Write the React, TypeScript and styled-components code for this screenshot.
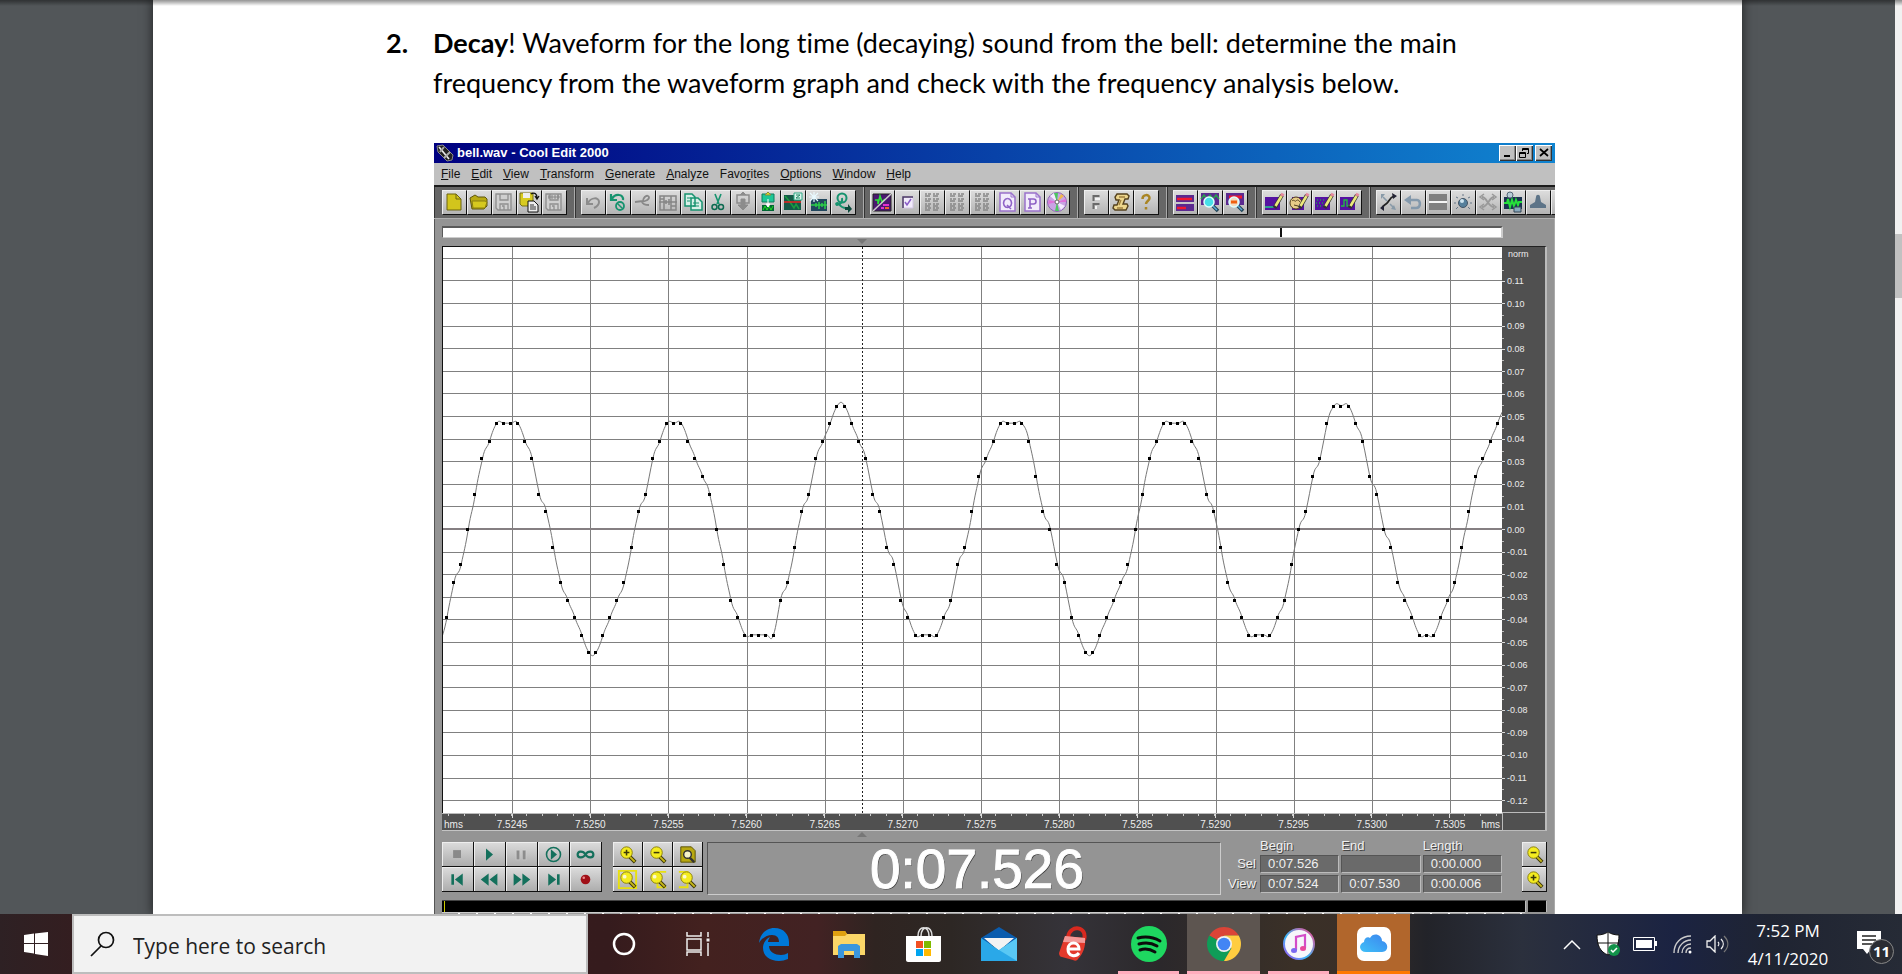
import React from "react";
import styled, { createGlobalStyle, css } from "styled-components";

const Global = createGlobalStyle`
  * { box-sizing: border-box; }
  html, body, #root { height: 100%; }
  body { margin: 0; overflow: hidden; background: #525659; font-family: "Liberation Sans", Arial, sans-serif; }
  button { font: inherit; color: inherit; margin: 0; padding: 0; border: 0; background: none; }
  svg { display: block; flex: none; }
`;

/* ---------- viewer ---------- */

const Screen = styled.div`
  height: 100vh;
  display: grid;
  grid-template-rows: minmax(0, 1fr) 60px;
`;
const Viewer = styled.main`
  position: relative;
  display: flex;
  overflow: hidden;
  background: #525659;
  &::after {
    content: "";
    position: absolute;
    inset: 0 0 auto 0;
    height: 6px;
    background: linear-gradient(rgba(0, 0, 0, 0.42), rgba(0, 0, 0, 0.3) 30%, rgba(0, 0, 0, 0));
  }
`;
const Desk = styled.div`
  flex: 1;
  min-width: 0;
  display: flex;
  justify-content: center;
  overflow: hidden;
`;
const Sheet = styled.article`
  width: 100%;
  max-width: 1589px;
  background: #fff;
  box-shadow: 0 0 10px 1px rgba(0, 0, 0, 0.55);
  padding: 23px 186px 0 233px;
`;
const Question = styled.div`
  display: flex;
  margin-bottom: 40px;
  font: 27px/40px Lato, Carlito, sans-serif;
  font-variant-ligatures: none;
  color: #000;
`;
const QuestionNumber = styled.b`
  flex: 0 0 47px;
`;
const QuestionText = styled.p`
  margin: 0;
`;
const ScrollTrack = styled.div`
  width: 7px;
  background: #f1f1f1;
  padding-top: 234px;
`;
const ScrollThumb = styled.div`
  height: 64px;
  background: #c1c1c1;
`;

/* ---------- audio editor window ---------- */

const EditorWindow = styled.section`
  margin-left: 48px;
  max-width: 1121px;
  background: #949494;
`;
const TitleBar = styled.header`
  height: 20px;
  display: flex;
  align-items: center;
  padding: 0 3px 0 2px;
  background: linear-gradient(90deg, #000080, #1084d0);
  color: #fff;
`;
const TitleText = styled.h1`
  flex: 1;
  margin: 0 0 0 3px;
  font-size: 13px;
  line-height: 20px;
`;
const CaptionButton = styled.button<{ $gap?: boolean }>`
  width: 17px;
  height: 16px;
  margin-left: ${(p) => (p.$gap ? 2 : 0)}px;
  background: #c0c0c0;
  box-shadow: inset 1px 1px #fff, inset -1px -1px #333, inset -2px -2px #888;
  display: grid;
  place-items: center;
`;
const MenuBar = styled.nav`
  height: 22px;
  display: flex;
  align-items: center;
  gap: 11px;
  padding-left: 7px;
  background: #c0c0c0;
`;
const MenuItem = styled.button`
  font-size: 12px;
  line-height: 20px;
  color: #111;
`;
const Toolbar = styled.div`
  height: 34px;
  display: flex;
  overflow: hidden;
  background: #666;
  border-top: 2px solid #1c1c1c;
  border-bottom: 1px solid #b0b0b0;
`;
const ToolGroup = styled.div<{ $first?: boolean; $last?: boolean }>`
  display: flex;
  flex: none;
  gap: 1px;
  padding: 3px 8px 0 ${(p) => (p.$first ? 8 : 6)}px;
  border-left: ${(p) => (p.$first ? 0 : 1)}px solid #aaa;
  box-shadow: inset 1px 0 #333;
  ${(p) => p.$last && css`flex: 1 0 0; min-width: 0; padding-right: 0;`}
`;
const ToolButton = styled.button`
  flex: none;
  width: 24px;
  height: 24px;
  display: grid;
  place-items: center;
  background: linear-gradient(#dedede, #b4b4b4);
  box-shadow: inset 1px 1px #eee, 1px 1px #111;
`;
const Work = styled.div`
  border-left: 1px solid #555;
  border-right: 1px solid #aaa;
  padding: 7px 7px 0;
`;
const Overview = styled.div`
  height: 12px;
  margin-right: 44px;
  display: flex;
  justify-content: flex-end;
  padding-right: 19.8%;
  background: #fff;
  border: solid;
  border-width: 2px 2px 1px 1px;
  border-color: #5a5a5a #ccc #ccc #5a5a5a;
`;
const OverviewMark = styled.div`
  width: 2px;
  background: #111;
`;
const CursorRow = styled.div<{ $h: number }>`
  height: ${(p) => p.$h}px;
  display: flex;
  padding: 1px 0 0 37.6%;
`;
const Scope = styled.div`
  display: grid;
  grid-template-columns: minmax(0, 1fr) 45px;
  grid-template-rows: 567px 18px;
`;
const Plot = styled.div`
  border-top: 1px solid #111;
  border-left: 1px solid #111;
  background: #fff;
  svg { width: 100%; height: 566px; }
`;
const LevelAxis = styled.div`
  display: flex;
  flex-direction: column;
  background: #505050;
  border-top: 1px solid #222;
  border-right: 2px solid #bbb;
  border-bottom: 1px solid #bbb;
  color: #ececec;
  font-size: 9px;
`;
const LevelUnit = styled.span`
  height: 23px;
  line-height: 14px;
  padding-left: 6px;
`;
const LevelMark = styled.span`
  flex: 1;
  display: flex;
  align-items: center;
  gap: 2px;
  white-space: nowrap;
  background: linear-gradient(#bbb, #bbb) left top / 2px 1px no-repeat;
  &::before { content: ""; width: 3px; height: 1px; background: #ddd; }
`;
const TimeAxis = styled.div`
  display: flex;
  align-items: flex-start;
  background: repeating-linear-gradient(90deg, #ccc 0 1px, transparent 1px 1.475%) 6px 0 / 100% 2px no-repeat #505050;
  border-top: 1px solid #bbb;
  border-bottom: 1px solid #c4c4c4;
  color: #ececec;
  font-size: 10px;
  line-height: 13px;
`;
const TimeUnit = styled.span<{ $w: number; $end?: boolean }>`
  flex: 0 0 ${(p) => p.$w}px;
  min-width: 0;
  display: flex;
  justify-content: ${(p) => (p.$end ? "flex-end" : "flex-start")};
  padding: 4px 2px 0;
  white-space: nowrap;
`;
const TimeMark = styled.span`
  flex: 1 1 0;
  display: flex;
  flex-direction: column;
  align-items: center;
  &::before { content: ""; width: 1px; height: 4px; background: #ddd; }
`;
const AxisCorner = styled.div`
  background: #505050;
  border: solid #bbb;
  border-width: 0 2px 1px 1px;
`;
const ControlRow = styled.div`
  display: flex;
  align-items: flex-start;
  height: 58px;
`;
const Pad = styled.div<{ $cols: number; $w: number; $gap: number }>`
  display: grid;
  grid-template-columns: repeat(${(p) => p.$cols}, ${(p) => p.$w}px);
  grid-auto-rows: 25px;
  margin-right: ${(p) => p.$gap}px;
`;
const PadButton = styled.button`
  display: grid;
  place-items: center;
  background: linear-gradient(#dcdcdc, #adadad);
  border-right: 1px solid #111;
  border-bottom: 1px solid #111;
  box-shadow: inset 1px 1px #eee;
`;
const Clock = styled.output`
  flex: 1;
  height: 53px;
  display: flex;
  justify-content: center;
  padding-left: 26px;
  border: 1px solid;
  border-color: #555 #ccc #ccc #555;
  color: #fff;
  font-size: 55px;
  line-height: 52px;
  -webkit-text-stroke: 1px #fff;
  text-shadow: 1px 1px #444;
`;
const Ranges = styled.table`
  margin: -5px 18px 0 4px;
  width: 279px;
  table-layout: fixed;
  border-collapse: separate;
  border-spacing: 2px;
  color: #f0f0f0;
  font-size: 13px;
  line-height: 14px;
  th { font-weight: 400; padding: 0; text-align: left; text-shadow: 1px 1px #444; height: 14px; }
  tbody th { text-align: right; padding-right: 2px; }
  td {
    height: 18px;
    padding: 0 0 0 7px;
    background: #6a6a6a;
    border: 1px solid;
    border-color: #555 #bbb #bbb #555;
  }
`;
const StubHead = styled.th`
  width: 31px;
`;
const MeterRow = styled.div`
  display: grid;
  grid-template-columns: minmax(0, 1fr) 19px;
  gap: 2px;
`;
const Meter = styled.div`
  height: 12px;
  background: #000;
  border-top: 1px solid #444;
  border-right: 1px solid #bbb;
`;
const MeterStart = styled.div`
  width: 1px;
  height: 11px;
  margin-left: 2px;
  background: #cc0;
`;
const MeterScale = styled.div`
  height: 30px;
  margin-right: 22px;
  border-top: 1px solid #ccc;
  background: repeating-linear-gradient(90deg, #a0a0a0 0 16px, #fff 16px 18px);
`;

/* ---------- taskbar ---------- */

const Taskbar = styled.footer`
  position: relative;
  display: flex;
  color: #fff;
  font-family: "Open Sans", "Noto Sans", sans-serif;
  background: linear-gradient(90deg, #2e2124 0, #371c1e 6%, #351b1d 32%, #43211f 37%, #422223 43%, #2f2421 46%, #2d2724 50%, #353339 56%, #2b282b 61%, #3a3027 68%, #3a2f28 71%, #222329 75%, #2b303d 80%, #1b2342 88%, #1f2432 93%, #262b36 100%);
`;
const StartButton = styled.button`
  width: 72px;
  display: grid;
  place-items: center;
`;
const SearchBox = styled.label`
  flex: 0 1 516px;
  display: flex;
  align-items: center;
  gap: 18px;
  padding: 0 16px;
  background: #f2f2f2;
  border: 2px solid #bdbdbd;
`;
const SearchInput = styled.input`
  flex: 1;
  min-width: 0;
  padding: 4px 0 0;
  border: 0;
  outline: 0;
  background: transparent;
  font: 21px/30px "Open Sans", "Noto Sans", sans-serif;
  &::placeholder { color: #222; opacity: 1; }
`;
const TaskButton = styled.button<{ $bg?: string; $line?: string; $narrow?: boolean; $tool?: boolean }>`
  width: ${(p) => (p.$tool ? 72 : 73)}px;
  margin: 0 1px;
  flex: none;
  display: grid;
  place-items: center;
  padding-right: ${(p) => (p.$tool ? 2 : 0)}px;
  background: ${(p) => p.$bg || "transparent"};
  ${(p) =>
    p.$line &&
    css`
      background-image: linear-gradient(${p.$line}, ${p.$line});
      background-repeat: no-repeat;
      background-position: bottom center;
      background-size: ${p.$narrow ? "61px" : "100%"} 3px;
    `}
`;
const Tray = styled.div`
  flex: 1;
  display: flex;
  justify-content: flex-end;
  align-items: center;
  padding-right: 7px;
`;
const TrayButton = styled.button<{ $gap: number }>`
  margin-right: ${(p) => p.$gap}px;
`;
const DateTime = styled.button`
  width: 92px;
  height: 60px;
  margin-right: 23px;
  padding-top: 2px;
  text-align: center;
  font-size: 17px;
  line-height: 28px;
  white-space: nowrap;
`;
const NoticeButton = styled.button`
  position: relative;
  width: 38px;
  height: 40px;
`;
const Badge = styled.span`
  position: absolute;
  right: 1px;
  bottom: 0;
  width: 25px;
  height: 25px;
  border-radius: 50%;
  border: 1px solid #888;
  background: #2b2d33;
  font-size: 15px;
  font-weight: 700;
  line-height: 23px;
  text-align: center;
`;

/* ---------- wave data ---------- */

const samples = [
  -5, -3, -2, 0, 2, 4, 5, 6, 6, 6, 6, 5, 4, 2, 1, -1, -3, -4, -5, -6, -7, -7, -6, -5, -4, -3, -1, 1, 2, 4, 5, 6, 6, 6,
  5, 4, 3, 2, 0, -2, -4, -5, -6, -6, -6, -6, -6, -4, -3, -1, 1, 2, 4, 5, 6, 7, 7, 6, 5, 4, 2, 1, -1, -2, -4, -5, -6,
  -6, -6, -6, -5, -4, -2, -1, 1, 3, 4, 5, 6, 6, 6, 6, 5, 3, 1, 0, -2, -3, -5, -6, -7, -7, -6, -5, -4, -3, -2, 0, 2, 4,
  5, 6, 6, 6, 6, 5, 4, 2, 1, -1, -3, -4, -5, -6, -6, -6, -6, -5, -4, -2, 0, 1, 3, 4, 6, 7, 7, 7, 6, 5, 3, 2, 0, -1,
  -3, -4, -5, -6, -6, -6, -5, -4, -3, -1, 1, 3, 4, 5, 6,
];
const STEP = (1497 - 446.4) / (samples.length - 1);
const points = samples.map((v, i) => [4 + i * STEP, 282 - v * 17.63] as [number, number]);
const line = [[-3, 397] as [number, number], ...points, [1063, 157] as [number, number]];
const wavePath = line.reduce((d, p, i) => {
  if (i === 0) return `M${p[0]},${p[1]}`;
  const a = line[Math.max(0, i - 2)];
  const b = line[i - 1];
  const n = line[Math.min(line.length - 1, i + 1)];
  const c1 = [b[0] + (p[0] - a[0]) / 5, b[1] + (p[1] - a[1]) / 4];
  const c2 = [p[0] - (n[0] - b[0]) / 5, p[1] - (n[1] - b[1]) / 4];
  return `${d}C${c1[0].toFixed(1)},${c1[1].toFixed(1)} ${c2[0].toFixed(1)},${c2[1].toFixed(1)} ${p[0].toFixed(1)},${p[1].toFixed(1)}`;
}, "");

const levels = Array.from({ length: 24 }, (_, i) => ((11 - i) / 100).toFixed(2));
const times = Array.from({ length: 13 }, (_, i) => (7.5245 + i * 0.0005).toFixed(4));

const Waveform = () => (
  <svg viewBox="0 0 1059 566" preserveAspectRatio="none" role="img" aria-label="Waveform">
    {Array.from({ length: 25 }, (_, i) => (
      <rect key={i} x="0" y={Math.round(282 + (i - 12) * 22.6)} width="1060" height="1" fill="#808080" />
    ))}
    {times.map((t, i) => (
      <rect key={t} x={Math.round(69 + i * 78.2)} y="0" width="1" height="566" fill="#808080" />
    ))}
    <rect x="0" y="281" width="1060" height="2" fill="#857f82" />
    <path d="M419.5 0V566" stroke="#222" strokeDasharray="2 2" />
    <path d={wavePath} fill="none" stroke="#777" strokeWidth="1" />
    {points.map(([x, y], i) => (
      <rect key={i} x={Math.round(x - 2)} y={Math.round(y - 1)} width="3" height="3" fill="#000" />
    ))}
  </svg>
);

/* ---------- toolbar drawings ---------- */

const I = ({ children, s = 24 }: { children: React.ReactNode; s?: number }) => (
  <svg width={s} height={s} viewBox="0 0 24 24" fill="none" aria-hidden="true">
    {children}
  </svg>
);
const Disk = ({ c }: { c: string }) => (
  <g>
    <path d="M4 4h15v16H6l-2-2z" stroke={c} strokeWidth="1.4" fill="#cfcfcf" />
    <path d="M8 4v6h8V4M8 20v-6h8v6M10 16h2v4" stroke={c} strokeWidth="1.3" />
  </g>
);
const ListGlyph = () => (
  <I>
    {[5, 13].map((x) => [4, 9, 14, 18].map((y) => (
      <path key={`${x}-${y}`} d={`M${x} ${y}h2M${x + 3} ${y}h3M${x} ${y + 2}h5`} stroke="#868686" strokeWidth="1.3" />
    )))}
  </I>
);
const PageGlyph = ({ q }: { q?: boolean }) => (
  <I>
    <path d="M5 3h11l4 4v14H5z" fill="#f2ecfb" stroke="#9a72cc" strokeWidth="1.5" />
    <path d="M16 3v4h4" stroke="#9a72cc" />
    {q ? (
      <path d="M12.500 8.500a4 4.500 0 1 0 .1 0M12 15l4 4" stroke="#8e62c6" strokeWidth="1.6" />
    ) : (
      <path d="M10 18V9h3.500a2.500 2.500 0 0 1 0 5H10M8 18h4M8 9h3" stroke="#8e62c6" strokeWidth="1.6" />
    )}
  </I>
);
const Pencil = () => (
  <>
    <path d="M20 5L12.500 18" stroke="#333" strokeWidth="4" />
    <path d="M19.500 6L13.500 16" stroke="#ece87c" strokeWidth="2.6" />
    <path d="M21 3.500l-1.500 2.500" stroke="#e8889c" strokeWidth="3.4" />
  </>
);
const Lens = ({ fill }: { fill: string }) => (
  <>
    <path d="M14 15l6 6" stroke="#245" strokeWidth="3.5" />
    <path d="M14 15l5 5" stroke="#58a8d8" strokeWidth="1.5" />
    <circle cx="11" cy="12" r="5" fill={fill} stroke="#dff" strokeWidth="1.5" />
  </>
);

const teal = "#17936f";
const glyphs: Record<string, React.ReactNode> = {
  New: <I><path d="M5 4h9l5 5v11H5z" fill="#d2c51c" stroke="#6c6410" /><path d="M14 4v5h5" stroke="#6c6410" /></I>,
  Open: <I><path d="M3 8l5-3 3 2h7l2 2v7l-3 3H5z" fill="#b8aa14" stroke="#5e560c" /><path d="M5 11h13l2 1-2 6H6z" fill="#d6c91e" stroke="#8a7e10" /></I>,
  Save: <I><Disk c="#909090" /></I>,
  "Save as": <I><path d="M3 3h13v13H5l-2-2z" fill="#d8cb20" stroke="#777018" /><path d="M6 3h7v5H6z" fill="#eee" /><path d="M14 4c4-2 6 0 6 4M18 6l2 3 2-3" stroke="#111" strokeWidth="1.3" /><path d="M11 11h6l4 4v7H11z" fill="#eee" stroke="#111" /><path d="M13 15h4M13 17h6M13 19h6" stroke="#333" /></I>,
  "Save copy": <I><Disk c="#909090" /><path d="M6 7h12M7 5v4M10 5v4M13 5v4M16 5v4" stroke="#888" /></I>,
  Undo: <I><path d="M6 8v6h6M7 13c3-6 11-6 11-1 0 3-3 5-5 6" stroke="#8c8c8c" strokeWidth="2" /></I>,
  "Undo off": <I><path d="M5 4v6h6M6 9c3-6 12-5 11 1" stroke={teal} strokeWidth="2.2" /><circle cx="14" cy="16" r="4" stroke={teal} strokeWidth="1.8" /><path d="M11 13l6 6" stroke={teal} strokeWidth="1.5" /></I>,
  Repeat: <I><path d="M4 12l8-1M12 11c0-3 3-6 5-5s1 4-3 5l-3 1c1 3 5 3 7 3" stroke="#888" strokeWidth="1.8" /></I>,
  Trim: <I><path d="M4 6h16v14H4z" stroke="#858585" strokeWidth="1.5" /><path d="M3 12h18M8 6v14M15 6v14M4 9h4M15 16h5M10 10v4M13 9v6" stroke="#858585" strokeWidth="1.5" /></I>,
  Copy: <I><path d="M4 4h7l3 3v9H4zM10 8h7l4 4v8H10z" fill="#d8f0e8" stroke={teal} strokeWidth="1.5" /><path d="M6 8h4M6 11h3M12 13h6M12 16h6" stroke={teal} /></I>,
  Cut: <I><path d="M9 4l4 10M15 4l-4 10" stroke={teal} strokeWidth="1.6" /><circle cx="8.500" cy="17" r="2.500" stroke="#0c6a50" strokeWidth="1.5" /><circle cx="15" cy="17" r="2.500" stroke="#0c6a50" strokeWidth="1.5" /></I>,
  Paste: <I><path d="M6 5h12v8H6z" stroke="#8c8c8c" strokeWidth="1.5" /><path d="M9 5l3-3 3 3M10 9h4v6h3l-5 5-5-5h3z" stroke="#8c8c8c" fill="#8c8c8c" /></I>,
  "Mix paste": <I><path d="M6 4h12v8H6z" fill="#1cc796" stroke="#0e7c5c" /><path d="M9 5l3-3 3 3z" fill="#dd2" stroke="#884" /><path d="M6 15h12v6H6z" fill="#063" /><path d="M7 20l2-4 2 4 2-4 2 4 2-4" stroke="#2d2" /><path d="M12 9v6M10 14l2 3 2-3z" stroke="#fff" fill="#fff" /></I>,
  Zero: <I><path d="M3 5h17v15H3z" fill="#155a48" /><path d="M4 6l5 6 4 6 2-4 3 5" stroke="#1c9c40" strokeWidth="1.5" /><path d="M3 12h17" stroke="#e22" strokeWidth="1.5" /><path d="M13 3h8v7h-8z" fill="#d8f4ec" stroke="#3a8" /><path d="M15 5h4l-4 3h4" stroke="#286" /></I>,
  Silence: <I><path d="M5 9h16v12H5z" fill="#22475e" /><path d="M5 15h16M10 13v4M13 12v7M16 13v4M19 11v8" stroke="#2bd048" strokeWidth="1.5" /><path d="M8 2v10M3 7h10M4 3l8 8M12 3l-8 8" stroke="#eafaff" strokeWidth="1.2" /></I>,
  Convert: <I><circle cx="11" cy="8" r="4.500" stroke={teal} strokeWidth="2" /><path d="M11 8c1 4-2 7-5 7-2-1 0-3 2-1 2 3 4 4 7 4" stroke={teal} strokeWidth="2" /><path d="M14 17h3v-3l4 5-4 4v-3h-3z" fill="#0c4a3c" /></I>,
  Spectral: <I><path d="M3 4h18v17H3z" fill="#4a1770" stroke="#222" /><path d="M5 10h3v4l2-8 2 6 3-3" stroke="#2de03a" strokeWidth="1.6" /><path d="M3 21L21 4" stroke="#ccc" strokeWidth="1.5" /><path d="M13 15h6M11 18h3" stroke="#e030d0" strokeWidth="2" /><path d="M15 18h4" stroke="#f06030" strokeWidth="2" /></I>,
  Options: <I><path d="M8 7h10v11H8z" fill="#f2ecfb" stroke="#d2c6e4" /><path d="M8 18V7h10" stroke="#4c3a66" strokeWidth="1.5" /><path d="M10 12l2 3 4-6" stroke="#8a5cc8" strokeWidth="1.5" /></I>,
  List1: <ListGlyph />, List2: <ListGlyph />, List3: <ListGlyph />,
  Queue: <PageGlyph q />, Playlist: <PageGlyph />,
  Disc: <I><circle cx="12" cy="12" r="9.500" fill="#c9a4e4" stroke="#8c66b4" /><path d="M12 12L5 6l4-3zM12 12l8 4-4 4z" fill="#f4eaff" /><path d="M12 12L9 3h4zM12 12l2 9h-4z" fill="#4cc860" /><path d="M12 12l9-3v3zM12 12l-9 2 1-4z" fill="#e070d8" /><path d="M12 12l7-6-3-2z" fill="#f0b84c" /><circle cx="12" cy="12" r="2" fill="#fff" stroke="#666" /></I>,
  Frequency: <I><path d="M9.500 19v-5h6M9.500 11V6h6" stroke="#6a6a6a" strokeWidth="2" /><path d="M11 8h5v2h-5zM11 16h2v3h-2z" fill="#f4f4f4" /></I>,
  Script: <I><path d="M8 4h10l2 2-1 3h-3l-2 5h4l1 2-2 4H6l-2-2 1-3h3l2-5H7L6 7z" fill="#ecd58c" stroke="#54401c" strokeWidth="1.4" /><path d="M10 7h6M12 10l-2 5M8 18h6" stroke="#a08040" strokeWidth="1.3" /></I>,
  Help: <I><path d="M8.500 9c0-5 7-5 7-1 0 3-3.500 3-3.500 6M12 17v2.500" stroke="#a98524" strokeWidth="2.5" /></I>,
  Levels: <I><path d="M3 5h18v7H3zM3 14h18v7H3z" fill="#5b2a90" /><path d="M4 9h15M4 18h9" stroke="#f01830" strokeWidth="2.5" /></I>,
  "Zoom wave": <I><path d="M3 3h18v12H3z" fill="#5b2a90" /><path d="M3 9l3-4 3 4 3-4 3 4 3-4 3 4" stroke="#2a9c50" strokeWidth="1.5" /><Lens fill="#48e0e8" /></I>,
  "Zoom level": <I><path d="M3 3h18v12H3z" fill="#5b2a90" /><path d="M6 7h13" stroke="#f01830" strokeWidth="3" /><Lens fill="#f4dcc0" /><path d="M8 12h6" stroke="#f06010" strokeWidth="3" /></I>,
  "Edit line": <I><path d="M3 7h15v13H3z" fill="#5412a0" /><path d="M3 17h9" stroke="#2c8" strokeWidth="1.5" /><Pencil /></I>,
  "Edit face": <I><path d="M5 7h12v13H5z" fill="#5412a0" /><circle cx="9" cy="13" r="6" fill="#e8cc88" stroke="#54401c" /><path d="M5 11c2-2 3 1 4 0s2-2 4 1M7 15l4 1" stroke="#54401c" /><Pencil /></I>,
  "Edit noise": <I><path d="M3 7h15v13H3z" fill="#5412a0" /><path d="M5 10h9M4 13h9M5 16h7" stroke="#20a050" strokeDasharray="1 2" strokeWidth="1.5" /><Pencil /></I>,
  "Edit pulse": <I><path d="M3 7h15v13H3z" fill="#5412a0" /><path d="M4 16h3v-6h3v6h3" stroke="#20c040" strokeWidth="1.3" /><Pencil /></I>,
  Cross: <I><path d="M6 18c1-3 4-3 6-6s3-5 6-6" stroke="#222" strokeWidth="1.8" /><path d="M7 7l4 4M14 14l4 4" stroke="#889aa8" strokeWidth="1.6" /><path d="M5 4h4L5 9zM18 15l2 5-5-1z" fill="#889aa8" /><path d="M16 3l5 3-4 3zM8 21l-4-3 4-3z" fill="#223" /></I>,
  Back: <I><path d="M9 10h7c4 0 4 8-1 8h-5" stroke="#8499ac" strokeWidth="2.6" /><path d="M10 5v10L3 10z" fill="#8499ac" /></I>,
  Bars: <I><path d="M3 4h18v7H3zM3 13h18v7H3z" fill="#808080" /><path d="M3 12h18" stroke="#f4f4f4" strokeWidth="2" /></I>,
  Bright: <I><circle cx="12" cy="13" r="4.500" fill="#56809c" stroke="#456" /><circle cx="11" cy="11" r="2" fill="#cfe4f0" /><path d="M12 4v2M5 7l2 1M19 7l-2 1M3 13h2M19 13h2M5 19l2-2M19 19l-2-2" stroke="#678" /></I>,
  Expand: <I><path d="M6 7c5 0 6 10 12 10M18 7c-5 0-6 10-12 10" stroke="#999" strokeWidth="1.8" /><path d="M8 4L4 7l4 3M16 4l4 3-4 3M8 14l-4 3 4 3M16 14l4 3-4 3" stroke="#999" strokeWidth="1.5" /></I>,
  Phase: <I><path d="M3 7h18v12H3z" fill="#1b3350" /><path d="M3 13h3l1-4 2 8 2-7 2 6 2-6 2 5 1-3h3" stroke="#26e03a" strokeWidth="2" /><circle cx="9" cy="5" r="3" fill="#b8cdd8" stroke="#567" /><path d="M13 17h7v5h-7z" fill="#88a8bc" stroke="#345" /></I>,
  Eject: <I><path d="M10 7c0-3 4-3 4 0l1 5 5 3v3H4v-3l5-3z" fill="#5d7488" /></I>,
  More: <I><path d="M4 6h14" stroke="#888" /></I>,
};

const toolGroups = [
  ["New", "Open", "Save", "Save as", "Save copy"],
  ["Undo", "Undo off", "Repeat", "Trim", "Copy", "Cut", "Paste", "Mix paste", "Zero", "Silence", "Convert"],
  ["Spectral", "Options", "List1", "List2", "List3", "Queue", "Playlist", "Disc"],
  ["Frequency", "Script", "Help"],
  ["Levels", "Zoom wave", "Zoom level"],
  ["Edit line", "Edit face", "Edit noise", "Edit pulse"],
  ["Cross", "Back", "Bars", "Bright", "Expand", "Phase", "Eject", "More"],
];

const menus: [string, string, string][] = [
  ["", "F", "ile"], ["", "E", "dit"], ["", "V", "iew"], ["", "T", "ransform"], ["", "G", "enerate"],
  ["", "A", "nalyze"], ["Favo", "r", "ites"], ["", "O", "ptions"], ["", "W", "indow"], ["", "H", "elp"],
];

const green = "#14705c";
const transport: [string, React.ReactNode][] = [
  ["Stop", <path d="M7 7h9v9H7z" fill="#8a8a8a" />],
  ["Play", <path d="M8 5l8 7-8 7z" fill={green} />],
  ["Pause", <path d="M6 7h4v11H6zM13 7h4v11h-4z" fill="#8c8c8c" stroke="#ddd" strokeWidth=".5" />],
  ["Play to end", <><circle cx="12" cy="12" r="8" stroke={green} strokeWidth="1.8" /><path d="M9 6l7 6-7 6z" fill={green} /></>],
  ["Loop", <path d="M12 12c-3-5-9-4-9 0s6 5 9 0 9-4 9 0-6 5-9 0z" stroke={green} strokeWidth="2.5" />],
  ["To start", <path d="M5 6h3v12H5zM18 5v14l-9-7z" fill={green} />],
  ["Rewind", <path d="M11 5v14l-9-7zM21 5v14l-9-7z" fill={green} />],
  ["Forward", <path d="M3 5v14l9-7zM13 5v14l9-7z" fill={green} />],
  ["To end", <path d="M6 5v14l9-7zM16 6h3v12h-3z" fill={green} />],
  ["Record", <><circle cx="12" cy="12" r="5.500" fill="#a01018" /><circle cx="10" cy="10" r="1.500" fill="#e88" /></>],
];
const Magnifier = ({ sign }: { sign?: string }) => (
  <>
    <path d="M14 14l6 6" stroke="#3c3808" strokeWidth="4" />
    <path d="M14 14l5.500 5.500" stroke="#c8b818" strokeWidth="2" />
    <circle cx="11" cy="10" r="6" fill="#f4ec20" stroke="#8a8010" />
    {sign ? <path d={sign} stroke="#3c3808" strokeWidth="1.6" /> : <circle cx="9" cy="9" r="2" fill="#fbfad0" />}
  </>
);
const plus = "M8 10h6M11 7v6";
const minus = "M8 10h6";
const zooms: [string, React.ReactNode][] = [
  ["Zoom in", <Magnifier sign={plus} />],
  ["Zoom out", <Magnifier sign={minus} />],
  ["Zoom full", <><path d="M5 4h11l4 4v12H5z" fill="#b8a810" stroke="#5a5208" /><path d="M14 15l5 5" stroke="#333" strokeWidth="2.5" /><circle cx="12" cy="12" r="4" fill="#f6f3c8" stroke="#333" strokeWidth="1.5" /></>],
  ["Zoom selection", <><path d="M3 3h18v18H3z" stroke="#e8e010" strokeWidth="2" /><Magnifier /></>],
  ["Zoom left", <><path d="M21 4h-9v16h9" stroke="#e8e010" strokeWidth="2" /><Magnifier /></>],
  ["Zoom right", <><path d="M3 4h9v16H3" stroke="#e8e010" strokeWidth="2" /><Magnifier /></>],
];

const Editor = () => (
  <EditorWindow>
    <TitleBar>
      <svg width="18" height="18" viewBox="0 0 18 18" aria-hidden="true">
        <path d="M1 2l6-1 10 10-1 5-5 1L2 8z" fill="#222" stroke="#888" />
        <path d="M3 3l10 12" stroke="#eee" strokeWidth="1.6" />
        <path d="M8 3L4 8M14 8l-6 6" stroke="#aaa" strokeWidth="2" />
      </svg>
      <TitleText>bell.wav - Cool Edit 2000</TitleText>
      <CaptionButton aria-label="Minimize"><svg width="10" height="10"><path d="M1 8h6" stroke="#000" strokeWidth="2" /></svg></CaptionButton>
      <CaptionButton aria-label="Restore"><svg width="11" height="11" fill="none" stroke="#000"><path d="M3.500 3V.5h6v5H8M3 1.500h7M.5 4.500h6v5h-6zM0 5.500h7" /></svg></CaptionButton>
      <CaptionButton aria-label="Close" $gap><svg width="10" height="10"><path d="M1 1l8 7M9 1L1 8" stroke="#000" strokeWidth="1.7" /></svg></CaptionButton>
    </TitleBar>
    <MenuBar>
      {menus.map(([a, u, b]) => (
        <MenuItem key={a + u + b}>{a}<u>{u}</u>{b}</MenuItem>
      ))}
    </MenuBar>
    <Toolbar>
      {toolGroups.map((g, i) => (
        <ToolGroup key={i} $first={i === 0} $last={i === toolGroups.length - 1}>
          {g.map((n) => <ToolButton key={n} aria-label={n}>{glyphs[n]}</ToolButton>)}
        </ToolGroup>
      ))}
    </Toolbar>
    <Work>
      <Overview><OverviewMark /></Overview>
      <CursorRow $h={8}><svg width="10" height="5"><path d="M0 0h10L5 5z" fill="#777" /></svg></CursorRow>
      <Scope>
        <Plot><Waveform /></Plot>
        <LevelAxis>
          <LevelUnit>norm</LevelUnit>
          {levels.map((l) => <LevelMark key={l}>{l}</LevelMark>)}
        </LevelAxis>
        <TimeAxis>
          <TimeUnit $w={31}>hms</TimeUnit>
          {times.map((t) => <TimeMark key={t}>{t}</TimeMark>)}
          <TimeUnit $w={13} $end>hms</TimeUnit>
        </TimeAxis>
        <AxisCorner />
      </Scope>
      <CursorRow $h={11}><svg width="10" height="5"><path d="M0 5h10L5 0z" fill="#777" /></svg></CursorRow>
      <ControlRow>
        <Pad $cols={5} $w={32} $gap={11}>
          {transport.map(([n, g]) => <PadButton key={n} aria-label={n}><I s={21}>{g}</I></PadButton>)}
        </Pad>
        <Pad $cols={3} $w={30} $gap={4}>
          {zooms.map(([n, g]) => <PadButton key={n} aria-label={n}><I s={23}>{g}</I></PadButton>)}
        </Pad>
        <Clock>0:07.526</Clock>
        <Ranges>
          <thead>
            <tr><StubHead /><th scope="col">Begin</th><th scope="col">End</th><th scope="col">Length</th></tr>
          </thead>
          <tbody>
            <tr><th scope="row">Sel</th><td>0:07.526</td><td /><td>0:00.000</td></tr>
            <tr><th scope="row">View</th><td>0:07.524</td><td>0:07.530</td><td>0:00.006</td></tr>
          </tbody>
        </Ranges>
        <Pad $cols={1} $w={25} $gap={0}>
          <PadButton aria-label="Vertical zoom out"><I s={23}><Magnifier sign={minus} /></I></PadButton>
          <PadButton aria-label="Vertical zoom in"><I s={23}><Magnifier sign={plus} /></I></PadButton>
        </Pad>
      </ControlRow>
      <MeterRow><Meter><MeterStart /></Meter><Meter /></MeterRow>
      <MeterScale />
    </Work>
  </EditorWindow>
);

/* ---------- taskbar drawings ---------- */

type Task = { name: string; bg?: string; line?: string; narrow?: boolean; tool?: boolean; icon: React.ReactNode };
const pink = "#ffacbd";
const tasks: Task[] = [
  { name: "Cortana", tool: true, icon: <svg width="26" height="26"><circle cx="13" cy="13" r="10" fill="none" stroke="#fff" strokeWidth="2.5" /></svg> },
  { name: "Task view", tool: true, icon: <svg width="26" height="26" fill="none" stroke="#eee" strokeWidth="1.5"><path d="M2 1v4h14V1M2 8h14v11H2zM2 25v-4h14v4M23 1v5M23 12v13" /><path d="M21.500 9h3" strokeWidth="3" /></svg> },
  { name: "Edge", icon: <svg width="32" height="34" viewBox="0 0 32 34"><path d="M1 16C2 7 8 1 16.500 1 26 1 31 8 31 15v4H11c0 6 6 9 12 9 3 0 5-1 7-2v6c-3 1-6 2-9 2C12 34 5 29 5 21c0-5 3-9 7-11-1 2-2 3-2 5h11c0-4-2-7-7-7-5 0-10 3-13 8z" fill="#0078d7" /></svg> },
  { name: "File Explorer", icon: <svg width="34" height="28" viewBox="0 0 34 28"><path d="M1 1h12l2 3h18v21H1z" fill="#fbd668" /><path d="M1 1h12l2 3-2 2H1z" fill="#dfa010" /><path d="M6 28V16l3-2h16l3 2v12h-6v-7H12v7z" fill="#3a96dd" /></svg> },
  { name: "Store", icon: <svg width="36" height="36" viewBox="0 0 36 36"><path d="M12 10c0-11 11-11 11 0M15 10c0-11 11-11 11 0" fill="none" stroke="#ddd" strokeWidth="1.5" /><path d="M0 10h35v24c0 1-1 2-2 2H2c-1 0-2-1-2-2z" fill="#fff" /><path d="M10 15h7v7h-7z" fill="#f25022" /><path d="M18 15h7v7h-7z" fill="#7fba00" /><path d="M10 23h7v7h-7z" fill="#00a4ef" /><path d="M18 23h7v7h-7z" fill="#ffb900" /></svg> },
  { name: "Mail", icon: <svg width="36" height="34" viewBox="0 0 36 34"><path d="M0 11L18 0l18 11v7H0z" fill="#0a5cae" /><path d="M3 11h30L18 24z" fill="#f3f3f3" /><path d="M0 11l18 12 18-12v23H0z" fill="#2aa8e8" /><path d="M4 11h28L18 23z" fill="#f3f3f3" /><path d="M36 11v23L18 23z" fill="#59c8f4" /></svg> },
  { name: "Express", icon: <svg width="32" height="36" viewBox="0 0 32 36"><path d="M10 11C12-2 30 0 26 14" fill="none" stroke="#d8291f" strokeWidth="4" /><path d="M7 10l20 2c1 8-2 16-7 21-1 2-3 2-5 1L4 31c-2 0-3-2-3-4z" fill="#e3392c" /><path d="M7 10l20 2v5L5 16z" fill="#f29a98" /><path d="M10 23h11c0-8-11-8-11 0s8 8 11 4" fill="none" stroke="#fff" strokeWidth="3" /></svg> },
  { name: "Spotify", line: pink, narrow: true, icon: <svg width="36" height="36" viewBox="0 0 36 36"><circle cx="18" cy="18" r="18" fill="#1ed760" /><path d="M7 12c8-2 15-1 22 3M8 18c7-2 13-1 18 2M9 24c6-2 10-1 15 2" fill="none" stroke="#0c0c0c" strokeWidth="3" strokeLinecap="round" /></svg> },
  { name: "Chrome", bg: "#5d5550", line: pink, icon: <svg width="34" height="34" viewBox="0 0 34 34"><path d="M17 17L2.300 8.500A17 17 0 0 1 31.700 8.500H17z" fill="#db4437" /><path d="M17 17L2.300 8.500A17 17 0 0 0 17 34l7.400-12.800z" fill="#0f9d58" /><path d="M17 8.500h14.700A17 17 0 0 1 17 34l7.400-12.800z" fill="#ffcd40" /><circle cx="17" cy="17" r="8" fill="#f1f1f1" /><circle cx="17" cy="17" r="6.300" fill="#4285f4" /></svg> },
  { name: "iTunes", line: pink, narrow: true, icon: <svg width="32" height="32" viewBox="0 0 32 32"><defs><linearGradient id="it" x1="0" y1="1" x2="1" y2="0"><stop offset="0" stopColor="#b04af0" /><stop offset=".4" stopColor="#38b8f8" /><stop offset="1" stopColor="#f84a90" /></linearGradient></defs><circle cx="16" cy="16" r="15" fill="#f6f6fa" stroke="url(#it)" strokeWidth="2" /><path d="M13 22V9l9-2v13" fill="none" stroke="#d34cc8" strokeWidth="2.2" /><ellipse cx="11" cy="22.500" rx="3" ry="2.500" fill="#7a6af0" /><ellipse cx="20" cy="20.500" rx="3" ry="2.500" fill="#e8489c" /></svg> },
  { name: "iCloud", bg: "#b1662c", line: "#ff7800", icon: <svg width="34" height="34" viewBox="0 0 34 34"><defs><linearGradient id="ic" x1="0" y1="1" x2="1" y2="0"><stop offset="0" stopColor="#3fc0f8" /><stop offset="1" stopColor="#3c84ee" /></linearGradient></defs><rect width="34" height="34" rx="7" fill="#fff" /><path d="M9 25c-7 0-8-8-2-10 0-4 4-6 6-4 3-6 12-4 12 3 7 1 7 11 0 11z" fill="url(#ic)" /></svg> },
];

const TaskbarArea = () => (
  <Taskbar>
    <StartButton aria-label="Start">
      <svg width="24" height="24" viewBox="0 0 24 24" fill="#fff"><path d="M0 3l10-1.500V11H0zM11 1.400L24 0v11H11zM0 12h10v9.500L0 20zM11 12h13v12l-13-2z" /></svg>
    </StartButton>
    <SearchBox>
      <svg width="25" height="26" fill="none" stroke="#111" strokeWidth="1.7"><circle cx="16" cy="9" r="7.500" /><path d="M11 15L1 25" /></svg>
      <SearchInput placeholder="Type here to search" aria-label="Search" />
    </SearchBox>
    {tasks.map((t) => (
      <TaskButton key={t.name} aria-label={t.name} $bg={t.bg} $line={t.line} $narrow={t.narrow} $tool={t.tool}>{t.icon}</TaskButton>
    ))}
    <Tray>
      <TrayButton $gap={15} aria-label="Show hidden icons"><svg width="18" height="11" fill="none" stroke="#fff" strokeWidth="1.5"><path d="M1 10l8-8 8 8" /></svg></TrayButton>
      <TrayButton $gap={13} aria-label="Security">
        <svg width="24" height="24" viewBox="0 0 24 24"><path d="M12 0c3 2 7 3 11 3 0 10-3 17-11 20C4 20 1 13 1 3c4 0 8-1 11-3z" fill="#fff" stroke="#111" /><path d="M12 1v22M1 11h22" stroke="#111" /><circle cx="18" cy="18" r="6" fill="#12924a" /><path d="M15 18l2 2 4-4" fill="none" stroke="#fff" strokeWidth="1.5" /></svg>
      </TrayButton>
      <TrayButton $gap={16} aria-label="Battery"><svg width="24" height="14"><path d="M.5.5h21v13H.5z" fill="none" stroke="#fff" /><path d="M3 3h16v8H3zM22 4h2v5h-2z" fill="#fff" /></svg></TrayButton>
      <TrayButton $gap={14} aria-label="Network"><svg width="19" height="19" fill="none" stroke="#ccc" strokeWidth="1.4"><path d="M1 18C1 8 8 1 18 1M5 18C5 11 11 5 18 5M9 18c0-5 4-9 9-9M13 18c0-3 2-5 5-5" /><circle cx="17" cy="17" r="1.500" fill="#fff" stroke="none" /></svg></TrayButton>
      <TrayButton $gap={13} aria-label="Volume"><svg width="23" height="18" fill="none" stroke="#eee" strokeWidth="1.3"><path d="M1 6h3l5-5v16l-5-5H1zM12 7c1 1 1 3 0 4M15 4c3 3 3 7 0 10" /><path d="M18 1c5 5 5 11 0 16" stroke="#777" /></svg></TrayButton>
      <DateTime>7:52 PM<br />4/11/2020</DateTime>
      <NoticeButton aria-label="Notifications">
        <svg width="26" height="26" viewBox="0 0 26 26"><path d="M0 0h24v18H14l-4 5-4-5H0z" fill="#fff" /><path d="M5 5h14M5 9h14M5 13h10" stroke="#222" strokeWidth="1.3" /></svg>
        <Badge>11</Badge>
      </NoticeButton>
    </Tray>
  </Taskbar>
);

export default function App() {
  return (
    <>
      <Global />
      <Screen>
        <Viewer>
          <Desk>
            <Sheet>
              <Question>
                <QuestionNumber>2.</QuestionNumber>
                <QuestionText>
                  <b>Decay</b>! Waveform for the long time (decaying) sound from the bell: determine the main frequency from the waveform graph and check with the frequency analysis below.
                </QuestionText>
              </Question>
              <Editor />
            </Sheet>
          </Desk>
          <ScrollTrack><ScrollThumb /></ScrollTrack>
        </Viewer>
        <TaskbarArea />
      </Screen>
    </>
  );
}
